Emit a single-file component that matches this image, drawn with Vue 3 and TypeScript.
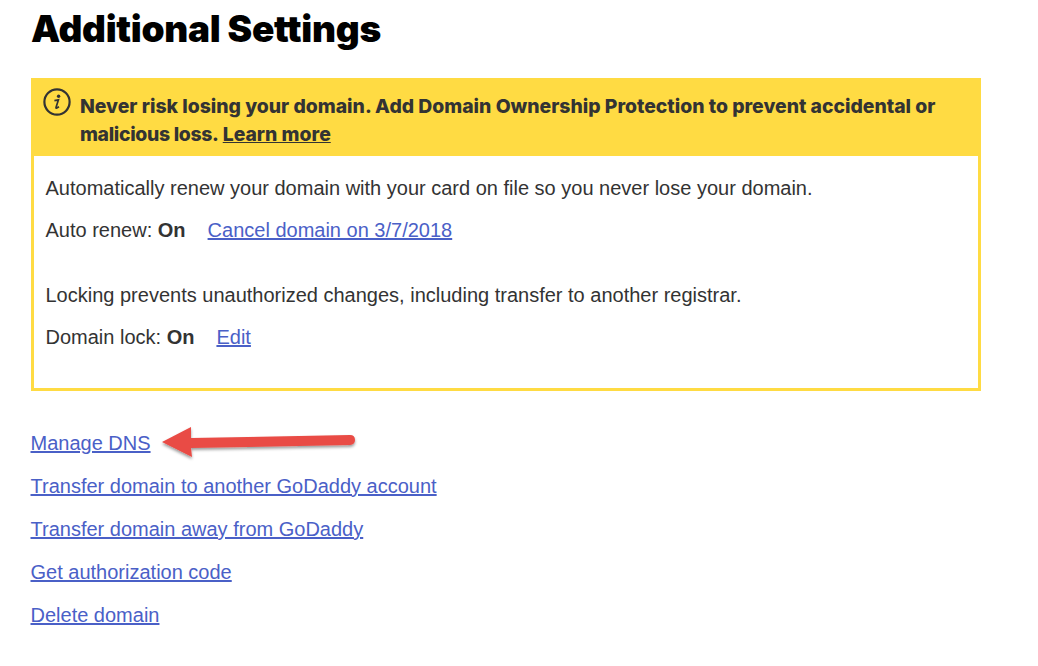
<script setup lang="ts">
const links: string[] = [
  'Transfer domain to another GoDaddy account',
  'Transfer domain away from GoDaddy',
  'Get authorization code',
  'Delete domain',
]
</script>

<template>
  <main class="page">
    <h1 class="title">Additional Settings</h1>
    <section class="card">
      <header class="banner">
        <svg class="info" viewBox="0 0 28 28" width="28" height="28" aria-hidden="true">
          <circle cx="14" cy="14" r="12.6" fill="none" stroke="#333" stroke-width="2.2" />
          <circle cx="15.6" cy="8.2" r="1.7" fill="#333" />
          <path d="M11.4 12.6 L15.4 11.9 L13 19.4 Q12.8 20.4 13.8 20 L16 18.8" fill="none" stroke="#333" stroke-width="1.7" />
        </svg>
        <p class="banner-text">Never risk losing your domain. Add Domain Ownership Protection to prevent accidental or <span class="tight">malicious loss.</span> <a class="banner-link" href="#">Learn more</a></p>
      </header>
      <div class="body">
        <p class="line">Automatically renew your domain with your card on file so you never lose your domain.</p>
        <p class="line status">Auto renew: <b>On</b><a class="link gap" href="#">Cancel domain on 3/7/2018</a></p>
        <p class="line second">Locking prevents unauthorized changes, including transfer to another registrar.</p>
        <p class="line status">Domain lock: <b>On</b><a class="link gap" href="#">Edit</a></p>
      </div>
    </section>
    <nav class="links">
      <div class="row first">
        <a class="link" href="#">Manage DNS</a>
        <svg class="arrow" viewBox="0 0 210 40" width="210" height="40" aria-hidden="true">
          <defs>
            <filter id="arrow-shadow" x="-10%" y="-30%" width="120%" height="170%">
              <feDropShadow dx="0" dy="2" stdDeviation="1.6" flood-color="#000" flood-opacity="0.4" />
            </filter>
          </defs>
          <path d="M2 19 L31 4 L31 15 L190 12 Q195 12 195 17 Q195 21.500 190 22 L31 25 L32 34 Z" fill="#e94b45" filter="url(#arrow-shadow)" />
        </svg>
      </div>
      <div v-for="l in links" :key="l" class="row"><a class="link" href="#">{{ l }}</a></div>
    </nav>
  </main>
</template>

<style scoped>
.page {
  width: 1038px;
  height: 666px;
  box-sizing: border-box;
  padding: 0 0 0 31px;
  overflow: hidden;
  background: #fff;
  font-family: "Liberation Sans", Arial, sans-serif;
  font-size: 20px;
  color: #333;
}
.title {
  margin: 0;
  height: 78px;
  padding-top: 7px;
  box-sizing: border-box;
  font-family: Inter, sans-serif;
  font-weight: 900;
  font-size: 37px;
  line-height: 44px;
  letter-spacing: -0.3px;
  color: #000;
}
.card {
  width: 950px;
  height: 313px;
  box-sizing: border-box;
  border: 3px solid #ffdb43;
  border-top: 0;
}
.banner {
  margin: 0 -3px;
  height: 78px;
  box-sizing: border-box;
  background: #ffdb43;
  display: flex;
  padding: 10px 0 0 12px;
  gap: 9px;
}
.info { flex: none; }
.banner-text {
  margin: 0;
  width: 880px;
  padding-top: 4px;
  font-family: Inter, sans-serif;
  font-weight: 800;
  font-size: 19.36px;
  line-height: 28px;
  color: #333;
}
.tight { letter-spacing: -0.33px; }
.banner-link { color: #333; text-decoration: underline; }
.body { padding: 18px 0 0 11.500px; }
.line { margin: 0; line-height: 28px; }
.status { margin-top: 14px; }
.second { margin-top: 37px; }
.link { color: #4a60c7; text-decoration: underline; }
.gap { margin-left: 22px; }
.links { margin-top: 38px; margin-left: -0.5px; display: flex; flex-direction: column; gap: 15px; }
.row { position: relative; line-height: 28px; }
.arrow { position: absolute; left: 129.5px; top: -6px; }
</style>
